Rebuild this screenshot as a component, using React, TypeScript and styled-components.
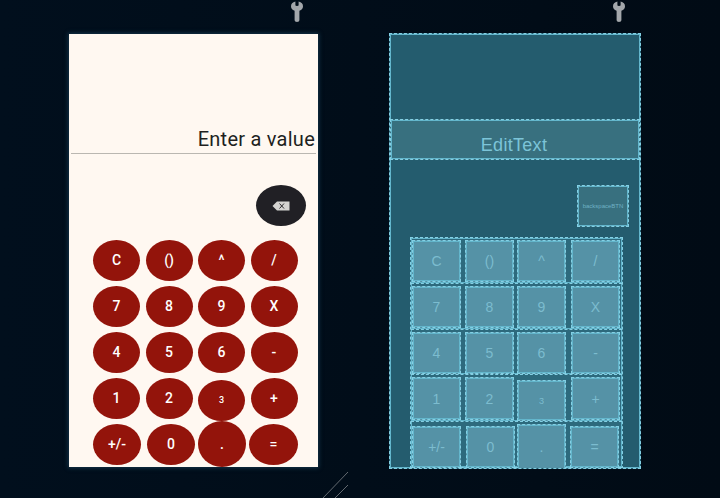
import React from 'react';
import styled, { createGlobalStyle, css } from 'styled-components';

type KeySpec = {
	label: string;
	small?: boolean;
	width?: number;
	height?: number;
	top?: number;
	left?: number;
};

type BlueRowSpec = { height: number; keys: KeySpec[] };

const PHONE_KEYS: KeySpec[] = [
	{ label: 'C' },
	{ label: '()' },
	{ label: '^' },
	{ label: '/' },
	{ label: '7' },
	{ label: '8' },
	{ label: '9' },
	{ label: 'X' },
	{ label: '4' },
	{ label: '5' },
	{ label: '6' },
	{ label: '-' },
	{ label: '1' },
	{ label: '2' },
	{ label: '3', small: true, top: 2 },
	{ label: '+' },
	{ label: '+/-', width: 48 },
	{ label: '0', width: 48, left: 1.5 },
	{ label: '.', width: 48, height: 46, top: -3 },
	{ label: '=', width: 49, left: -1.5 },
];

const BLUE_ROWS: BlueRowSpec[] = [
	{ height: 46, keys: [{ label: 'C' }, { label: '()' }, { label: '^' }, { label: '/' }] },
	{ height: 46, keys: [{ label: '7' }, { label: '8' }, { label: '9' }, { label: 'X' }] },
	{ height: 45, keys: [{ label: '4' }, { label: '5' }, { label: '6' }, { label: '-' }] },
	{
		height: 47,
		keys: [
			{ label: '1', height: 43 },
			{ label: '2', height: 43 },
			{ label: '3', small: true, top: 3, height: 41 },
			{ label: '+', height: 43 },
		],
	},
	{
		height: 46,
		keys: [
			{ label: '+/-', top: 2 },
			{ label: '0', top: 2, left: 1 },
			{ label: '.', height: 46 },
			{ label: '=', top: 2, left: -1 },
		],
	},
];

export default function App() {
	return (
		<>
			<GlobalStyle />
			<Canvas>
				<Surface $width={249}>
					<WrenchBar $height={34} $inset={15}>
						<WrenchIcon />
					</WrenchBar>
					<Phone>
						<Display>
							<ValueField>Enter a value</ValueField>
						</Display>
						<BackspaceRow>
							<BackspaceButton aria-label="backspace">
								<BackspaceIcon />
							</BackspaceButton>
						</BackspaceRow>
						<KeyGrid>
							{PHONE_KEYS.map((key) => (
								<Key
									key={key.label}
									$small={key.small}
									$width={key.width}
									$height={key.height}
									$top={key.top}
									$left={key.left}
								>
									{key.label}
								</Key>
							))}
						</KeyGrid>
					</Phone>
					<ResizeHandle />
				</Surface>
				<Surface $width={252}>
					<WrenchBar $height={33} $inset={16}>
						<WrenchIcon />
					</WrenchBar>
					<Blueprint>
						<BlueSpacer />
						<BlueField>EditText</BlueField>
						<BlueBackRow>
							<BlueBack>backspaceBTN</BlueBack>
						</BlueBackRow>
						<BluePad>
							{BLUE_ROWS.map((row) => (
								<BlueRow key={row.keys[0].label} $height={row.height}>
									{row.keys.map((key) => (
										<BlueKey
											key={key.label}
											$small={key.small}
											$height={key.height}
											$top={key.top}
											$left={key.left}
										>
											{key.label}
										</BlueKey>
									))}
								</BlueRow>
							))}
						</BluePad>
					</Blueprint>
				</Surface>
			</Canvas>
		</>
	);
}

function WrenchIcon() {
	return (
		<svg width="12" height="21" viewBox="0 0 12 21" fill="#a3a7ab">
			<path d="M4.4 0.4 V4.2 Q4.4 5 6 5 Q7.6 5 7.6 4.2 V0.4 Q12 1.4 12 5.2 Q12 8.4 8.4 9.8 V19.2 Q8.4 21 6 21 Q3.6 21 3.6 19.2 V9.8 Q0 8.4 0 5.2 Q0 1.4 4.4 0.4 Z" />
		</svg>
	);
}

function BackspaceIcon() {
	return (
		<svg width="18" height="10" viewBox="0 0 18 10">
			<path d="M5 0.5 H17.5 V9.5 H5 L0.5 5 Z" fill="#d4d3d1" />
			<path d="M7.5 2.5 L12 7.5 M12 2.5 L7.5 7.5" stroke="#2a292c" strokeWidth="1" fill="none" />
		</svg>
	);
}

function ResizeHandle() {
	return (
		<HandleSvg width="26" height="26" viewBox="0 0 26 26">
			<path d="M0 26 L25 0 M12 26 L25 13" stroke="#646a70" strokeWidth="1" fill="none" />
		</HandleSvg>
	);
}

// fine dashes over a solid ring, how the layout editor outlines a view
const outline = css`
	border: 1px dashed #84d0e4;
	box-shadow: inset 0 0 0 1px #63b6cc;
`;

const GlobalStyle = createGlobalStyle`
	html,
	body {
		margin: 0;
		height: 100%;
		background: #010d1a;
		overflow: hidden;
	}
`;

const Canvas = styled.div`
	display: flex;
	align-items: flex-start;
	gap: 71px;
	width: 720px;
	height: 498px;
	box-sizing: border-box;
	padding-left: 69px;
	overflow: hidden;
	background: linear-gradient(90deg, #010f1d, #010b15);
`;

const Surface = styled.div<{ $width: number }>`
	display: flex;
	flex-direction: column;
	width: ${(p) => p.$width}px;
	flex-shrink: 0;
`;

const WrenchBar = styled.div<{ $height: number; $inset: number }>`
	display: flex;
	justify-content: flex-end;
	height: ${(p) => p.$height}px;
	padding: 1px ${(p) => p.$inset}px 0 0;
	box-sizing: border-box;
`;

const Phone = styled.div`
	width: 249px;
	height: 433px;
	overflow: hidden;
	background: #fff8f1;
	box-shadow: 0 0 4px 1px #14354a;
	font-family: Roboto, sans-serif;
`;

const Display = styled.div`
	height: 120px;
	display: flex;
	align-items: flex-end;
	padding: 0 2px;
`;

const ValueField = styled.div`
	flex: 1;
	height: 26px;
	line-height: 24px;
	padding-right: 1px;
	text-align: right;
	font-size: 20px;
	letter-spacing: 0.25px;
	color: #211f1e;
	border-bottom: 1px solid #bab7b1;
`;

const BackspaceRow = styled.div`
	display: flex;
	justify-content: flex-end;
	padding: 31px 12px 0 0;
`;

const BackspaceButton = styled.div`
	width: 50px;
	height: 41px;
	border-radius: 50%;
	background: #212025;
	display: flex;
	align-items: center;
	justify-content: center;
`;

const KeyGrid = styled.div`
	display: grid;
	grid-template-columns: repeat(4, 47px);
	grid-auto-rows: 41px;
	gap: 5px 5.5px;
	padding: 14px 0 0 24px;
`;

const Key = styled.div<{ $small?: boolean; $width?: number; $height?: number; $top?: number; $left?: number }>`
	width: ${(p) => p.$width ?? 47}px;
	height: ${(p) => p.$height ?? 41}px;
	margin: ${(p) => p.$top ?? 0}px 0 0 ${(p) => p.$left ?? 0}px;
	padding-bottom: 1px;
	box-sizing: border-box;
	border-radius: 50%;
	background: #93140b;
	color: #ffffff;
	font-size: ${(p) => (p.$small ? 9 : 14)}px;
	font-weight: 500;
	display: flex;
	align-items: center;
	justify-content: center;
`;

const HandleSvg = styled.svg`
	flex-shrink: 0;
	margin: 5px 0 0 254px;
`;

const Blueprint = styled.div`
	width: 252px;
	height: 436px;
	box-sizing: border-box;
	overflow: hidden;
	background: #245c6e;
	${outline}
	font-family: 'Liberation Sans', Arial, sans-serif;
`;

const BlueSpacer = styled.div`
	height: 85px;
`;

const BlueField = styled.div`
	height: 41px;
	box-sizing: border-box;
	background: #38707f;
	${outline}
	color: #7cc4d8;
	font-size: 18px;
	letter-spacing: 0.3px;
	text-indent: -2px;
	text-align: center;
	line-height: 50px;
	overflow: hidden;
`;

const BlueBackRow = styled.div`
	display: flex;
	justify-content: flex-end;
	padding: 25px 11px 0 0;
`;

const BlueBack = styled.div`
	width: 52px;
	height: 42px;
	box-sizing: border-box;
	background: #38707f;
	${outline}
	color: #6fb0c4;
	font-size: 6px;
	line-height: 40px;
	text-align: center;
	white-space: nowrap;
`;

const BluePad = styled.div`
	width: 213px;
	margin: 10px 0 0 20px;
	box-sizing: border-box;
	${outline}
	background: #2d6a7d;
`;

const BlueRow = styled.div<{ $height: number }>`
	display: grid;
	grid-template-columns: 53px 52px 54px 49px;
	height: ${(p) => p.$height}px;
	box-sizing: border-box;
	padding: 2px 0 0 1px;
	border-bottom: 1px dashed #84d0e4;
	box-shadow: inset 0 -1px 0 #63b6cc;
`;

const BlueKey = styled.div<{ $small?: boolean; $height?: number; $top?: number; $left?: number }>`
	width: 49px;
	height: ${(p) => p.$height ?? 42}px;
	margin: ${(p) => p.$top ?? 0}px 0 0 ${(p) => p.$left ?? 0}px;
	box-sizing: border-box;
	background: #5592a6;
	${outline}
	color: #7cbccf;
	font-family: 'Liberation Sans', Arial, sans-serif;
	font-size: ${(p) => (p.$small ? 9 : 14)}px;
	display: flex;
	align-items: center;
	justify-content: center;
`;
